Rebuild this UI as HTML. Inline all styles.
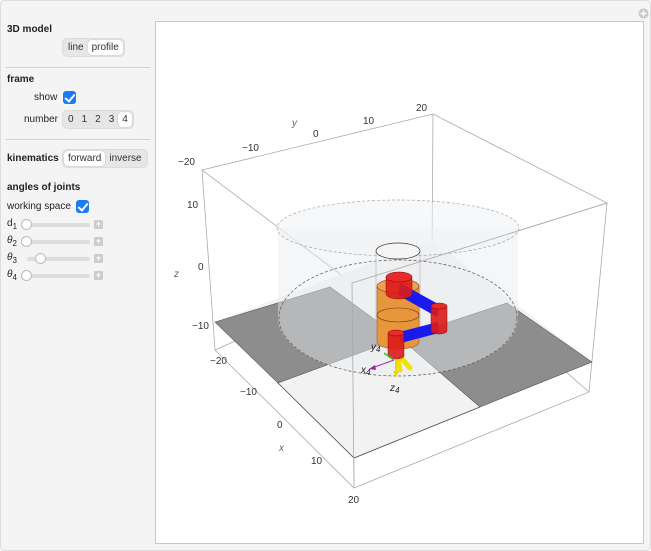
<!DOCTYPE html>
<html><head><meta charset="utf-8"><style>
*{margin:0;padding:0;box-sizing:border-box}
body{width:651px;height:551px;background:#fff;font-family:"Liberation Sans",sans-serif;font-size:10px;color:#222;position:relative;overflow:hidden}
.frame{position:absolute;left:0;top:0;width:651px;height:551px;background:#f4f4f4;border:1px solid #ddd;border-radius:4px}
.plot{position:absolute;left:155px;top:21px;width:489px;height:523px;background:#fff;border:1px solid #c8c8c8}
.t{position:absolute;white-space:nowrap}
.b{font-weight:bold}
.seg{position:absolute;display:flex;background:#e6e6e6;border-radius:5px;height:19px;padding:1px;border:1px solid #dcdcdc}
.seg span{padding:0 4px;line-height:15px;border-radius:4px;color:#333}
.seg span.on{background:#fff;box-shadow:0 0 1px #999}
.hr{position:absolute;left:6px;width:144px;height:1px;background:#d0d0d0}
.cb{position:absolute;width:13px;height:13px;background:#1a7cf5;border-radius:3px}
.cb:after{content:"";position:absolute;left:4px;top:1px;width:4px;height:8px;border:solid #fff;border-width:0 2px 2px 0;transform:rotate(40deg)}
.sl{position:absolute;left:27px;width:63px;height:4px;background:#ddd;border-radius:2px}
.kn{position:absolute;width:11px;height:11px;border-radius:50%;background:#fff;border:1px solid #bbb;top:-4px}
.pl{position:absolute;width:9px;height:9px;background:#ccc;border-radius:1px;color:#fff;font-size:9px;line-height:9px;text-align:center;font-weight:bold}
</style></head><body>
<div class="frame"></div>
<svg style="position:absolute;left:638px;top:8px" width="11" height="11"><circle cx="5.5" cy="5.5" r="5" fill="#c8c8c8"/><path d="M5.5 2.5v6M2.5 5.5h6" stroke="#fff" stroke-width="1.5"/></svg>
<div class="t b" style="left:7px;top:24px">3D model</div>
<div class="seg" style="left:62px;top:38px"><span>line</span><span class="on">profile</span></div>
<div class="hr" style="top:67px"></div>
<div class="t b" style="left:7px;top:74px">frame</div>
<div class="t" style="left:34px;top:92px">show</div>
<div class="cb" style="left:63px;top:91px"></div>
<div class="t" style="left:24px;top:114px">number</div>
<div class="seg" style="left:62px;top:110px"><span>0</span><span>1</span><span>2</span><span>3</span><span class="on">4</span></div>
<div class="hr" style="top:139px"></div>
<div class="t b" style="left:7px;top:153px">kinematics</div>
<div class="seg" style="left:62px;top:149px"><span class="on">forward</span><span>inverse</span></div>
<div class="t b" style="left:7px;top:182px">angles of joints</div>
<div class="t" style="left:7px;top:201px">working space</div>
<div class="cb" style="left:76px;top:200px"></div>
<div class="t" style="left:7px;top:218px">d<sub style="font-size:8px">1</sub></div>
<div class="t" style="left:7px;top:235px"><i>θ</i><sub style="font-size:8px">2</sub></div>
<div class="t" style="left:7px;top:252px"><i>θ</i><sub style="font-size:8px">3</sub></div>
<div class="t" style="left:7px;top:269px"><i>θ</i><sub style="font-size:8px">4</sub></div>
<div class="sl" style="top:223px"><div class="kn" style="left:-6px"></div></div>
<div class="sl" style="top:240px"><div class="kn" style="left:-6px"></div></div>
<div class="sl" style="top:257px"><div class="kn" style="left:8px"></div></div>
<div class="sl" style="top:274px"><div class="kn" style="left:-6px"></div></div>
<div class="pl" style="left:94px;top:220px">+</div>
<div class="pl" style="left:94px;top:237px">+</div>
<div class="pl" style="left:94px;top:254px">+</div>
<div class="pl" style="left:94px;top:271px">+</div>
<div class="plot"></div>
<svg style="position:absolute;left:0;top:0" width="651" height="551" font-family="Liberation Sans" font-size="11" fill="#222">
<g stroke="#aaa" stroke-width="0.8" fill="none">
<path d="M202 170L433 114L607 203L352 283Z"/>
<path d="M433 114L432 255"/>
<path d="M202 170L215 350L354 488L589 392L607 203M352 283L354 488"/>
<path d="M215 350L432 255L589 392"/>
</g>
<path d="M215 322L432 240L592 362L354 458Z" fill="#f2f2f2"/>
<path d="M215 322L330 287L400 338L278 383Z" fill="#8d8d8d" stroke="#555" stroke-width=".6"/>
<path d="M400 338L507 303L592 362L480 407Z" fill="#8d8d8d" stroke="#555" stroke-width=".6"/>
<path d="M278 383L354 458L480 407" fill="none" stroke="#444" stroke-width=".8"/>
<path d="M278 228L278 318A120 58 0 0 0 518 318L518 228Z" fill="#e8ecf0" opacity=".45"/>
<ellipse cx="398" cy="228" rx="121" ry="28" fill="#f0f3f6" opacity=".5" stroke="#555" stroke-width=".7" stroke-dasharray="3,2"/>
<ellipse cx="398" cy="318" rx="119" ry="58" fill="none" stroke="#555" stroke-width=".7" stroke-dasharray="3,2"/>
<path d="M376 251L376 330M420 251L420 330" stroke="#bbb" stroke-width=".7"/>
<ellipse cx="398" cy="251" rx="22" ry="8" fill="#f5f5f5" stroke="#333" stroke-width=".7"/>
<path d="M352 283L354 488M352 283L607 203" stroke="#aaa" stroke-width=".8" fill="none"/>
<path d="M377 286L377 342A21 7 0 0 0 419 342L419 286Z" fill="#e8963c" stroke="#a0602a" stroke-width=".6"/>
<ellipse cx="398" cy="286" rx="21" ry="7" fill="#f0a050" stroke="#7a4a20" stroke-width=".6"/>
<ellipse cx="398" cy="315" rx="21" ry="7" fill="none" stroke="#5a3a1a" stroke-width=".6"/>
<path d="M400 283L440 305L437 317L398 295Z" fill="#1a1aee"/>
<path d="M438 322L439 333L401 343L399 332Z" fill="#1a1aee"/>
<path d="M386 277L386 294A13 5 0 0 0 412 294L412 277Z" fill="#dd1a1a" stroke="#800" stroke-width=".5" opacity=".9"/>
<ellipse cx="399" cy="277" rx="13" ry="5" fill="#e82a2a" stroke="#800" stroke-width=".5"/>
<path d="M431 306L431 331A8 3 0 0 0 447 331L447 306Z" fill="#dd1a1a" stroke="#800" stroke-width=".5" opacity=".9"/>
<ellipse cx="439" cy="306" rx="8" ry="3" fill="#e82a2a" stroke="#800" stroke-width=".5"/>
<path d="M403 360L410 368M398 360L400 370" stroke="#f2e200" stroke-width="5" stroke-linecap="round"/>
<path d="M388 333L388 356A8 3 0 0 0 404 356L404 333Z" fill="#dd1a1a" stroke="#800" stroke-width=".5" opacity=".9"/>
<ellipse cx="396" cy="333" rx="8" ry="3" fill="#e82a2a" stroke="#800" stroke-width=".5"/>
<path d="M396 360L396 373" stroke="#e6d800" stroke-width="2"/><path d="M393 371L396 377L399 371Z" fill="#e6d800"/>
<path d="M394 360L372 368" stroke="#a020a0" stroke-width="1"/><path d="M375 365L369 369L376 370Z" fill="#a020a0"/>
<path d="M394 360L384 353" stroke="#2c2" stroke-width="1.5"/>
<text x="371" y="350" font-style="italic" font-size="10">y<tspan font-size="8" dy="2">4</tspan></text>
<text x="361" y="373" font-style="italic" font-size="10">x<tspan font-size="8" dy="2">4</tspan></text>
<text x="390" y="391" font-style="italic" font-size="10">z<tspan font-size="8" dy="2">4</tspan></text>
<g font-size="10" fill="#333">
<text x="292" y="126" font-style="italic" fill="#666">y</text>
<text x="178" y="165">−20</text><text x="242" y="151">−10</text><text x="313" y="137">0</text><text x="363" y="124">10</text><text x="416" y="111">20</text>
<text x="187" y="208">10</text><text x="198" y="270">0</text><text x="174" y="277" font-style="italic" fill="#666">z</text><text x="192" y="329">−10</text>
<text x="210" y="364">−20</text><text x="240" y="395">−10</text><text x="277" y="428">0</text><text x="279" y="451" font-style="italic" fill="#666">x</text><text x="311" y="464">10</text><text x="348" y="503">20</text>
</g>
</svg>
</body></html>
